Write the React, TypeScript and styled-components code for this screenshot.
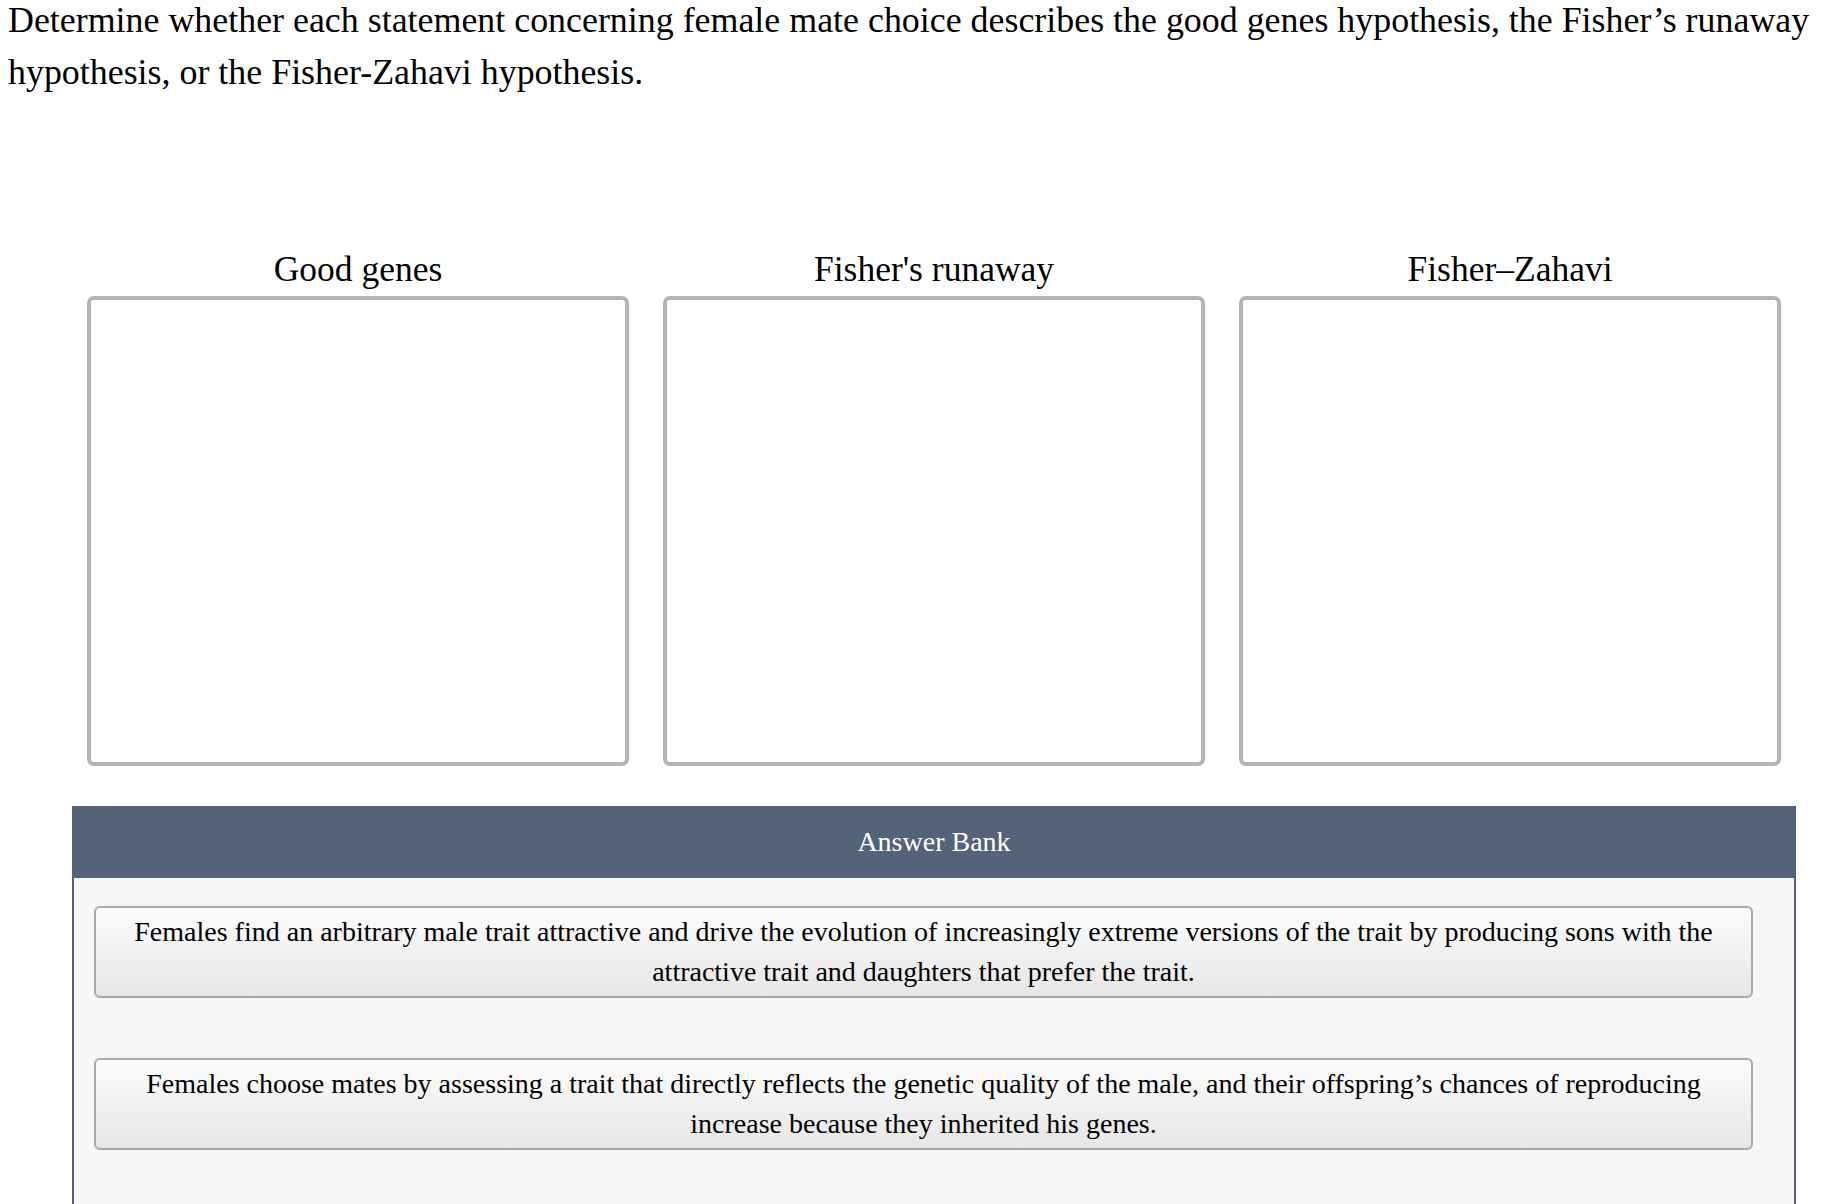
import React from "react";
import styled, { createGlobalStyle } from "styled-components";

const Global = createGlobalStyle`
  html, body { background: #ffffff; }
  body {
    margin: 0 8px;
    font-family: "Liberation Serif", "Times New Roman", serif;
    color: #000;
  }
`;

const Page = styled.div`
  display: flex;
  flex-direction: column;
`;

const Prompt = styled.p`
  margin: -6px 0 0 0;
  font-size: 35.9px;
  line-height: 52px;
`;

const Columns = styled.div`
  display: grid;
  grid-template-columns: repeat(3, 542px);
  column-gap: 34px;
  margin: 150px 0 0 79px;
`;

const Column = styled.div`
  display: flex;
  flex-direction: column;
  align-items: stretch;
`;

const ColumnTitle = styled.div`
  text-align: center;
  font-size: 35.5px;
  line-height: 42px;
  margin-bottom: 6px;
`;

const DropZone = styled.div`
  height: 470px;
  box-sizing: border-box;
  border: 4px solid #b5b5b5;
  border-radius: 7px;
  background: #fff;
`;

const Bank = styled.div`
  margin: 40px 0 0 64px;
  width: 1724px;
  box-sizing: border-box;
  display: flex;
  flex-direction: column;
`;

const BankHeader = styled.div`
  height: 72px;
  background: #546379;
  color: #fff;
  display: flex;
  align-items: center;
  justify-content: center;
  font-size: 28px;
`;

const BankBody = styled.div`
  background: #f7f7f7;
  border-left: 2px solid #546379;
  border-right: 2px solid #546379;
  padding: 28px 41px 60px 20px;
  display: flex;
  flex-direction: column;
  gap: 60px;
  min-height: 400px;
`;

const Card = styled.div`
  box-sizing: border-box;
  min-height: 92px;
  border: 2px solid #a9a9a9;
  border-radius: 6px;
  background: linear-gradient(to bottom, #fcfcfc 0%, #e6e6e6 100%);
  padding: 4px 24px;
  text-align: center;
  font-size: 28px;
  line-height: 40px;
  display: flex;
  align-items: center;
  justify-content: center;
`;

const titles = ["Good genes", "Fisher's runaway", "Fisher\u2013Zahavi"];

const answers = [
  "Females find an arbitrary male trait attractive and drive the evolution of increasingly extreme versions of the trait by producing sons with the attractive trait and daughters that prefer the trait.",
  "Females choose mates by assessing a trait that directly reflects the genetic quality of the male, and their offspring\u2019s chances of reproducing increase because they inherited his genes.",
];

export default function App() {
  return (
    <>
      <Global />
      <Page>
        <Prompt>
          Determine whether each statement concerning female mate choice describes the good genes
          hypothesis, the Fisher&rsquo;s runaway hypothesis, or the Fisher-Zahavi hypothesis.
        </Prompt>
        <Columns>
          {titles.map((t) => (
            <Column key={t}>
              <ColumnTitle>{t}</ColumnTitle>
              <DropZone />
            </Column>
          ))}
        </Columns>
        <Bank>
          <BankHeader>Answer Bank</BankHeader>
          <BankBody>
            {answers.map((a) => (
              <Card key={a}>{a}</Card>
            ))}
          </BankBody>
        </Bank>
      </Page>
    </>
  );
}
